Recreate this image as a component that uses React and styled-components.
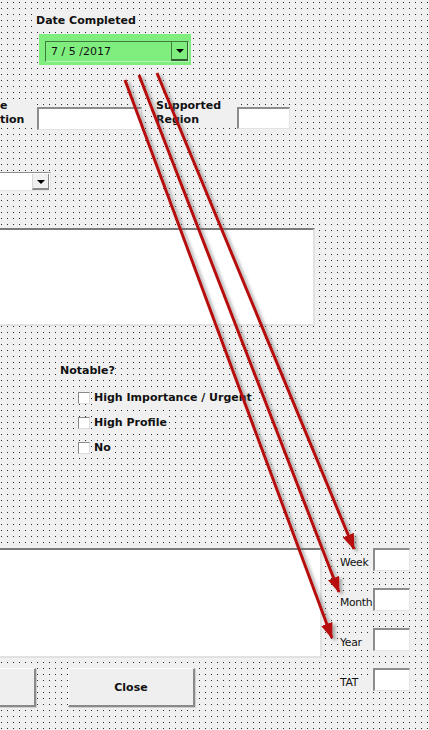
import React from "react";
import styled, { createGlobalStyle } from "styled-components";

const GlobalStyle = createGlobalStyle`
  html, body {
    margin: 0;
    padding: 0;
    background: #f0f0f0;
  }
  * {
    box-sizing: border-box;
  }
`;

const arrows = [
  { x1: 157, y1: 73, x2: 354, y2: 549 },
  { x1: 139, y1: 75, x2: 339, y2: 592 },
  { x1: 125, y1: 80, x2: 332, y2: 638 },
];

const FormField = ({ label, wide }) => (
  <FieldRow>
    <SmallLabel>{label}</SmallLabel>
    <TextBox $w={wide || 37} $h={23} />
  </FieldRow>
);

const Arrows = () => (
  <Overlay width="429" height="730" viewBox="0 0 429 730">
    <defs>
      <filter id="shadow" x="-20%" y="-20%" width="140%" height="140%">
        <feDropShadow dx="3" dy="2" stdDeviation="1.8" floodColor="#666" floodOpacity="0.5" />
      </filter>
      <marker
        id="head"
        markerUnits="userSpaceOnUse"
        markerWidth="16"
        markerHeight="12"
        refX="15"
        refY="6"
        orient="auto"
      >
        <path d="M0,0 L16,6 L0,12 Z" fill="#b80a0a" />
      </marker>
    </defs>
    <g filter="url(#shadow)">
      {arrows.map((a, i) => (
        <line
          key={i}
          x1={a.x1}
          y1={a.y1}
          x2={a.x2}
          y2={a.y2}
          stroke="#b80a0a"
          strokeWidth="3"
          markerEnd="url(#head)"
        />
      ))}
    </g>
  </Overlay>
);

const App = () => {
  return (
    <>
      <GlobalStyle />
      <Form>
        <TopBlock>
          <BoldLabel>Date Completed</BoldLabel>
          <GreenFrame>
            <GreenCombo>
              <ComboText>7 / 5 /2017</ComboText>
              <DropButton $green>
                <Caret />
              </DropButton>
            </GreenCombo>
          </GreenFrame>
        </TopBlock>

        <InfoRow>
          <BoldLabel $w={37}>
            e
            <br />
            tion
          </BoldLabel>
          <TextBox $w={105} $h={23} $top={8} />
          <BoldLabel $w={81} $left={14}>
            Supported
            <br />
            Region
          </BoldLabel>
          <TextBox $w={53} $h={22} $top={8} />
        </InfoRow>

        <Combo>
          <DropButton>
            <Caret />
          </DropButton>
        </Combo>

        <TextArea $w={317} $h={98} $top={37} />

        <NotableBlock>
          <BoldLabel>Notable?</BoldLabel>
          <CheckList>
            <CheckRow>
              <CheckBox />
              <BoldLabel>High Importance / Urgent</BoldLabel>
            </CheckRow>
            <CheckRow>
              <CheckBox />
              <BoldLabel>High Profile</BoldLabel>
            </CheckRow>
            <CheckRow>
              <CheckBox />
              <BoldLabel>No</BoldLabel>
            </CheckRow>
          </CheckList>
        </NotableBlock>

        <BottomGrid>
          <LeftCol>
            <TextArea $w={324} $h={110} />
            <ButtonRow>
              <Button $w={39} />
              <Button $w={127}>Close</Button>
            </ButtonRow>
          </LeftCol>
          <RightCol>
            <FormField label="Week" />
            <FormField label="Month" />
            <FormField label="Year" />
            <FormField label="TAT" />
          </RightCol>
        </BottomGrid>

        <Arrows />
      </Form>
    </>
  );
};

const Form = styled.div`
  position: relative;
  width: 429px;
  height: 730px;
  overflow: hidden;
  background-color: #2a2a2a;
  background-image: linear-gradient(to right, #f0f0f0 5px, transparent 5px),
    linear-gradient(to bottom, #f0f0f0 5px, transparent 5px);
  background-size: 6px 6px;
  background-position: 2px 3px;
  font-family: "DejaVu Sans", Tahoma, Verdana, sans-serif;
  color: #111;
`;

const Overlay = styled.svg`
  position: absolute;
  left: 0;
  top: 0;
  pointer-events: none;
`;

const BoldLabel = styled.div`
  display: inline-block;
  width: ${(p) => (p.$w ? `${p.$w}px` : "auto")};
  margin-left: ${(p) => p.$left || 0}px;
  background: #f0f0f0;
  font-size: 11px;
  font-weight: bold;
  line-height: 14px;
  white-space: nowrap;
`;

const SmallLabel = styled.div`
  width: 34px;
  padding-left: 1px;
  background: #f0f0f0;
  font-size: 10.8px;
  line-height: 14px;
  margin-top: 8px;
  letter-spacing: -0.3px;
`;

const TopBlock = styled.div`
  padding: 9px 0 0 36px;
  height: 60px;
`;

const GreenFrame = styled.div`
  width: 152px;
  height: 31px;
  margin: 6px 0 0 3px;
  padding: 7px 2px 0 6px;
  background: #7fee7f;
`;

const GreenCombo = styled.div`
  display: flex;
  align-items: center;
  justify-content: space-between;
  height: 21px;
  background: #7fee7f;
  border-top: 1px solid #3f7a3f;
  border-left: 1px solid #3f7a3f;
  border-bottom: 1px solid #b8f4b8;
  border-right: 1px solid #b8f4b8;
`;

const ComboText = styled.span`
  padding-left: 5px;
  font-size: 11px;
  color: #111;
`;

const DropButton = styled.div`
  display: flex;
  align-items: center;
  justify-content: center;
  width: 17px;
  height: 100%;
  background: ${(p) => (p.$green ? "#7fee7f" : "#f0f0f0")};
  border-left: 1px solid ${(p) => (p.$green ? "#3f7a3f" : "#d8d8d8")};
  border-bottom: 2px solid ${(p) => (p.$green ? "#2f5e2f" : "#8a8a8a")};
  border-right: 1px solid ${(p) => (p.$green ? "#2f5e2f" : "#8a8a8a")};
`;

const Caret = styled.span`
  width: 0;
  height: 0;
  border-left: 4px solid transparent;
  border-right: 4px solid transparent;
  border-top: 4px solid #000;
  margin-top: 1px;
`;

const InfoRow = styled.div`
  display: flex;
  align-items: flex-start;
  margin-top: 39px;
  height: 31px;
`;

const TextBox = styled.div`
  width: ${(p) => p.$w}px;
  height: ${(p) => p.$h}px;
  margin-top: ${(p) => p.$top || 0}px;
  background: #fff;
  border-top: 2px solid #8c8c8c;
  border-left: 2px solid #8c8c8c;
  border-bottom: 1px solid #e4e4e4;
  border-right: 1px solid #e4e4e4;
`;

const Combo = styled.div`
  display: flex;
  justify-content: flex-end;
  width: 51px;
  height: 19px;
  margin-top: 42px;
  background: #fff;
  border-top: 1px solid #8c8c8c;
  border-bottom: 1px solid #e4e4e4;
  border-right: 1px solid #e4e4e4;
  padding: 1px 1px 0 0;
`;

const TextArea = styled.div`
  width: ${(p) => p.$w}px;
  height: ${(p) => p.$h}px;
  margin-top: ${(p) => p.$top || 0}px;
  margin-left: -2px;
  background: #fff;
  border-top: 2px solid #7a7a7a;
  border-left: 2px solid #7a7a7a;
  border-bottom: 2px solid #e2e2e2;
  border-right: 2px solid #e2e2e2;
`;

const NotableBlock = styled.div`
  margin: 33px 0 0 60px;
  height: 189px;
`;

const CheckList = styled.div`
  display: flex;
  flex-direction: column;
  gap: 11px;
  margin: 13px 0 0 18px;
`;

const CheckRow = styled.div`
  display: flex;
  align-items: center;
  gap: 4px;
  height: 14px;
`;

const CheckBox = styled.span`
  width: 12px;
  height: 12px;
  background: #fff;
  border-top: 1px solid #8a8a8a;
  border-left: 1px solid #8a8a8a;
  border-bottom: 1px solid #dcdcdc;
  border-right: 1px solid #dcdcdc;
`;

const BottomGrid = styled.div`
  display: flex;
  align-items: flex-start;
`;

const LeftCol = styled.div`
  display: flex;
  flex-direction: column;
  gap: 10px;
  width: 339px;
`;

const ButtonRow = styled.div`
  display: flex;
  gap: 32px;
  margin-left: -3px;
`;

const Button = styled.div`
  display: flex;
  align-items: center;
  justify-content: center;
  width: ${(p) => p.$w}px;
  height: 39px;
  background: #efefef;
  border-top: 1px solid #fff;
  border-left: 1px solid #fff;
  border-right: 2px solid #8a8a8a;
  border-bottom: 2px solid #8a8a8a;
  box-shadow: 1px 1px 0 #d0d0d0;
  font-size: 11px;
  font-weight: bold;
`;

const RightCol = styled.div`
  display: flex;
  flex-direction: column;
  gap: 17px;
`;

const FieldRow = styled.div`
  display: flex;
  align-items: flex-start;
  height: 23px;
`;

export default App;
